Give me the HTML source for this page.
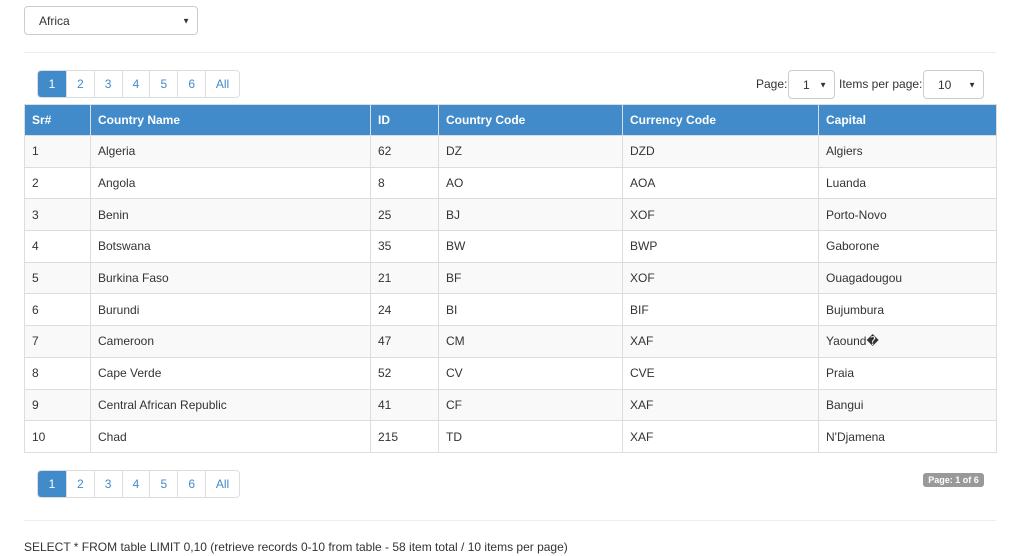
<!DOCTYPE html>
<html><head><style>
body{margin:0;width:1024px;height:556px;overflow:hidden;background:#fff;font-family:"Liberation Sans",sans-serif;font-size:12px;color:#333;position:relative}
.abs{position:absolute}
.sel{border:1px solid #ccc;border-radius:4px;box-sizing:border-box;background:#fff}
.sel span{position:absolute;top:50%;transform:translateY(-50%)}
.sel i{position:absolute;right:7px;top:50%;transform:translateY(-50%);font-style:normal;font-size:8px;color:#333}
hr{position:absolute;left:24px;width:972px;margin:0;border:0;border-top:1px solid #eee}
.pg{display:flex;border:1px solid #ddd;border-radius:4px;height:28px;box-sizing:border-box;overflow:hidden}
.pg div{width:28px;border-left:1px solid #ddd;display:flex;align-items:center;justify-content:center;color:#428bca;font-size:12px;box-sizing:border-box}
.pg div:first-child{border-left:0;background:#428bca;color:#fff}
.pg div:last-child{width:34px}
table{position:absolute;left:24px;top:104px;width:973px;border-collapse:collapse;table-layout:fixed}
td,th{border:1px solid #ddd;text-align:left;padding:0 7px;height:31.7px;box-sizing:border-box;font-size:12px}
th{background:#428bca;color:#fff;font-weight:bold;height:31px;border-color:#ddd}
tr:nth-child(even) td{background:#f9f9f9}
</style></head><body>
<div class="abs sel" style="left:24px;top:6px;width:174px;height:29px"><span style="left:14px">Africa</span><i>▼</i></div>
<hr style="top:52px">
<div class="abs pg" style="left:37px;top:70px;width:203px"><div>1</div><div>2</div><div>3</div><div>4</div><div>5</div><div>6</div><div>All</div></div>
<div class="abs" style="left:756px;top:77px">Page:</div>
<div class="abs sel" style="left:788px;top:70px;width:47px;height:29px"><span style="left:14px">1</span><i>▼</i></div>
<div class="abs" style="left:839px;top:77px">Items per page:</div>
<div class="abs sel" style="left:923px;top:70px;width:61px;height:29px"><span style="left:14px">10</span><i>▼</i></div>
<table>
<colgroup><col style="width:66px"><col style="width:280px"><col style="width:68px"><col style="width:184px"><col style="width:196px"><col></colgroup>
<tr><th>Sr#</th><th>Country Name</th><th>ID</th><th>Country Code</th><th>Currency Code</th><th>Capital</th></tr>
<tr><td>1</td><td>Algeria</td><td>62</td><td>DZ</td><td>DZD</td><td>Algiers</td></tr>
<tr><td>2</td><td>Angola</td><td>8</td><td>AO</td><td>AOA</td><td>Luanda</td></tr>
<tr><td>3</td><td>Benin</td><td>25</td><td>BJ</td><td>XOF</td><td>Porto-Novo</td></tr>
<tr><td>4</td><td>Botswana</td><td>35</td><td>BW</td><td>BWP</td><td>Gaborone</td></tr>
<tr><td>5</td><td>Burkina Faso</td><td>21</td><td>BF</td><td>XOF</td><td>Ouagadougou</td></tr>
<tr><td>6</td><td>Burundi</td><td>24</td><td>BI</td><td>BIF</td><td>Bujumbura</td></tr>
<tr><td>7</td><td>Cameroon</td><td>47</td><td>CM</td><td>XAF</td><td>Yaound�</td></tr>
<tr><td>8</td><td>Cape Verde</td><td>52</td><td>CV</td><td>CVE</td><td>Praia</td></tr>
<tr><td>9</td><td>Central African Republic</td><td>41</td><td>CF</td><td>XAF</td><td>Bangui</td></tr>
<tr><td>10</td><td>Chad</td><td>215</td><td>TD</td><td>XAF</td><td>N'Djamena</td></tr>
</table>
<div class="abs pg" style="left:37px;top:470px;width:203px"><div>1</div><div>2</div><div>3</div><div>4</div><div>5</div><div>6</div><div>All</div></div>
<div class="abs" style="left:923px;top:473px;width:61px;height:14px;background:#999;border-radius:3px;color:#fff;font-size:9px;font-weight:bold;text-align:center;line-height:14px">Page: 1 of 6</div>
<hr style="top:520px">
<div class="abs" style="left:24px;top:540px">SELECT * FROM table LIMIT 0,10 (retrieve records 0-10 from table - 58 item total / 10 items per page)</div>
</body></html>
